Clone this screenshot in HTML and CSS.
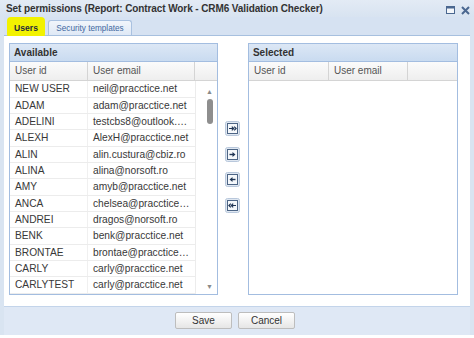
FILE: index.html
```html
<!DOCTYPE html>
<html lang="en">
<head>
  <meta charset="UTF-8">
  <title>Set permissions</title>
  <link rel="stylesheet" href="styles.css">
</head>
<body>

  <div class="window">
    <div class="titlebar">
      <span class="title">Set permissions (Report: Contract Work - CRM6 Validation Checker)</span>
      <span class="tools">
        <svg width="9" height="8" viewBox="0 0 9 8"><rect x="0.5" y="0.5" width="8" height="7" fill="#f3f6fa" stroke="#4a6790"/><rect x="0" y="0" width="9" height="2.5" fill="#4a6790"/></svg>
        <svg width="9" height="9" viewBox="0 0 9 9"><path d="M1 1 L8 8 M8 1 L1 8" stroke="#4a6790" stroke-width="2"/></svg>
      </span>
    </div>

    <div class="tabbar">
      <div class="tab active">Users</div>
      <div class="tab">Security templates</div>
    </div>

    <div class="content">
      <!-- Available -->
      <div class="panel available">
        <div class="panel-header">Available</div>
        <div class="grid-head">
          <div class="col-id">User id</div>
          <div class="col-email">User email</div>
          <div class="col-rest"></div>
        </div>
        <div class="grid-body">
          <div class="rows">
            <div class="row"><div class="col-id">NEW USER</div><div class="col-email">neil@pracctice.net</div></div>
            <div class="row"><div class="col-id">ADAM</div><div class="col-email">adam@pracctice.net</div></div>
            <div class="row"><div class="col-id">ADELINI</div><div class="col-email">testcbs8@outlook.com</div></div>
            <div class="row"><div class="col-id">ALEXH</div><div class="col-email">AlexH@pracctice.net</div></div>
            <div class="row"><div class="col-id">ALIN</div><div class="col-email">alin.custura@cbiz.ro</div></div>
            <div class="row"><div class="col-id">ALINA</div><div class="col-email">alina@norsoft.ro</div></div>
            <div class="row"><div class="col-id">AMY</div><div class="col-email">amyb@pracctice.net</div></div>
            <div class="row"><div class="col-id">ANCA</div><div class="col-email">chelsea@pracctice.net</div></div>
            <div class="row"><div class="col-id">ANDREI</div><div class="col-email">dragos@norsoft.ro</div></div>
            <div class="row"><div class="col-id">BENK</div><div class="col-email">benk@pracctice.net</div></div>
            <div class="row"><div class="col-id">BRONTAE</div><div class="col-email">brontae@pracctice.net</div></div>
            <div class="row"><div class="col-id">CARLY</div><div class="col-email">carly@pracctice.net</div></div>
            <div class="row"><div class="col-id">CARLYTEST</div><div class="col-email">carly@pracctice.net</div></div>
          </div>
          <div class="scrollbar">
            <span class="arrow">&#9650;</span>
            <span class="thumb"></span>
            <span class="spacer"></span>
            <span class="arrow">&#9660;</span>
          </div>
        </div>
      </div>

      <!-- Move buttons -->
      <div class="movers">
        <button class="mover" title="Add all">
          <svg width="15" height="15" viewBox="0 0 15 15"><rect x="0.5" y="0.5" width="14" height="14" rx="2" fill="#dfe7f1" stroke="#b9c8dc"/><rect x="2.5" y="2.5" width="10" height="10" fill="#f5f8fb" stroke="#4d6585"/><path d="M4 7.5 H8.5 M6.8 5.6 L8.7 7.5 L6.8 9.4 M9.2 5.6 L11.1 7.5 L9.2 9.4" fill="none" stroke="#1f3555" stroke-width="1.2"/></svg>
        </button>
        <button class="mover" title="Add">
          <svg width="15" height="15" viewBox="0 0 15 15"><rect x="0.5" y="0.5" width="14" height="14" rx="2" fill="#dfe7f1" stroke="#b9c8dc"/><rect x="2.5" y="2.5" width="10" height="10" fill="#f5f8fb" stroke="#4d6585"/><path d="M4.5 7.5 H8" stroke="#1f3555" stroke-width="1.4"/><path d="M7.5 5 L10.5 7.5 L7.5 10 Z" fill="#1f3555"/></svg>
        </button>
        <button class="mover" title="Remove">
          <svg width="15" height="15" viewBox="0 0 15 15"><rect x="0.5" y="0.5" width="14" height="14" rx="2" fill="#dfe7f1" stroke="#b9c8dc"/><rect x="2.5" y="2.5" width="10" height="10" fill="#f5f8fb" stroke="#4d6585"/><path d="M7 7.5 H10.5" stroke="#1f3555" stroke-width="1.4"/><path d="M7.5 5 L4.5 7.5 L7.5 10 Z" fill="#1f3555"/></svg>
        </button>
        <button class="mover" title="Remove all">
          <svg width="15" height="15" viewBox="0 0 15 15"><rect x="0.5" y="0.5" width="14" height="14" rx="2" fill="#dfe7f1" stroke="#b9c8dc"/><rect x="2.5" y="2.5" width="10" height="10" fill="#f5f8fb" stroke="#4d6585"/><path d="M11 7.5 H6.5 M8.2 5.6 L6.3 7.5 L8.2 9.4 M5.8 5.6 L3.9 7.5 L5.8 9.4" fill="none" stroke="#1f3555" stroke-width="1.2"/></svg>
        </button>
      </div>

      <!-- Selected -->
      <div class="panel selected">
        <div class="panel-header">Selected</div>
        <div class="grid-head">
          <div class="col-id">User id</div>
          <div class="col-email">User email</div>
          <div class="col-rest"></div>
        </div>
        <div class="grid-body"></div>
      </div>
    </div>

    <div class="footer">
      <button class="btn">Save</button>
      <button class="btn">Cancel</button>
    </div>
  </div>

</body>
</html>
```

FILE: styles.css
```css
body {
  margin: 0;
  font-family: "Liberation Sans", Arial, sans-serif;
  background: #fff;
}

.window {
  width: 474px;
  height: 335px;
  background: #d9e4f1;
  display: flex;
  flex-direction: column;
}

.titlebar {
  height: 19px;
  display: flex;
  align-items: center;
  justify-content: space-between;
  padding: 0 4px 0 6px;
  background: linear-gradient(#e3ebf5, #d8e3f1);
}

.title {
  font-size: 10px;
  font-weight: bold;
  color: #333;
  letter-spacing: -0.1px;
}

.tools {
  display: flex;
  gap: 6px;
  align-items: center;
  padding-top: 3px;
}

.tabbar {
  height: 18px;
  margin: 0 4px;
  padding-left: 3px;
  display: flex;
  align-items: flex-end;
  gap: 3px;
  background: #d6e2f2;
  border-bottom: 1px solid #a7c0df;
}

.tab {
  width: 84px;
  height: 15px;
  line-height: 15px;
  box-sizing: border-box;
  text-align: center;
  font-size: 8.2px;
  color: #3f68a0;
  background: linear-gradient(#f1f5fb, #dfe9f6);
  border: 1px solid #a9c1e0;
  border-bottom: none;
  border-radius: 3px 3px 0 0;
}

.tab.active {
  width: 38px;
  height: 21px;
  line-height: 22px;
  margin-bottom: -3px;
  font-weight: bold;
  font-size: 8.6px;
  color: #1e2b3c;
  background: #f2f200;
  border: none;
  border-radius: 4px;
}

.content {
  flex: 1;
  margin: 0 4px;
  background: #fff;
  display: flex;
  padding: 7px 12px 11px 5px;
}

.panel {
  border: 1px solid #a3bde0;
  display: flex;
  flex-direction: column;
  background: #fff;
}

.available {
  width: 208px;
}

.selected {
  width: 209px;
}

.panel-header {
  height: 17px;
  line-height: 17px;
  padding-left: 4px;
  font-size: 10px;
  font-weight: bold;
  color: #333;
  background: linear-gradient(#dce7f5, #c9dbf0);
  border-bottom: 1px solid #a3bde0;
}

.grid-head {
  height: 18px;
  display: flex;
  background: linear-gradient(#fbfbfb, #eeeeee);
  border-bottom: 1px solid #d4d4d4;
  font-size: 10px;
  color: #555;
}

.grid-head > div {
  line-height: 18px;
  padding-left: 5px;
  border-right: 1px solid #d4d4d4;
  box-sizing: border-box;
}

.grid-head > .col-rest {
  flex: 1;
  border-right: none;
}

.available .col-id { width: 78px; }
.available .col-email { width: 107px; }
.selected .col-id { width: 80px; }
.selected .col-email { width: 79px; }

.grid-body {
  flex: 1;
  display: flex;
  overflow: hidden;
}

.rows {
  width: 185px;
  border-right: 1px solid #ececec;
}

.row {
  height: 16.33px;
  box-sizing: border-box;
  display: flex;
  border-bottom: 1px solid #ececec;
  font-size: 10.2px;
  color: #383838;
}

.row > div {
  line-height: 15.5px;
  padding: 0 4px 0 5px;
  box-sizing: border-box;
  white-space: nowrap;
  overflow: hidden;
  text-overflow: ellipsis;
}

.row .col-id {
  border-right: 1px solid #f0f0f0;
}

.scrollbar {
  flex: 1;
  display: flex;
  flex-direction: column;
  align-items: center;
  padding: 6px 0 3px 6px;
}

.arrow {
  font-size: 7px;
  color: #8a8a8a;
  line-height: 9px;
}

.thumb {
  width: 6px;
  height: 25px;
  margin-top: 3px;
  background: #8e8e8e;
  border-radius: 3px;
}

.spacer {
  flex: 1;
}

.movers {
  width: 30px;
  display: flex;
  flex-direction: column;
  align-items: center;
  padding-top: 78px;
  gap: 10.5px;
}

.mover {
  width: 15px;
  height: 15px;
  padding: 0;
  margin: 0;
  border: none;
  background: none;
  cursor: pointer;
}

.mover svg {
  display: block;
}

.footer {
  height: 31px;
  display: flex;
  justify-content: center;
  align-items: center;
  gap: 6px;
  padding-right: 4px;
  background: #dfe8f5;
  border-top: 1px solid #c3d4ea;
  margin: 0 4px;
}

.btn {
  width: 57px;
  height: 17px;
  padding: 0;
  font-family: "Liberation Sans", Arial, sans-serif;
  font-size: 10px;
  color: #333;
  background: linear-gradient(#ffffff, #e6e6e6);
  border: 1px solid #bdbdbd;
  border-radius: 2px;
  cursor: pointer;
}
```
